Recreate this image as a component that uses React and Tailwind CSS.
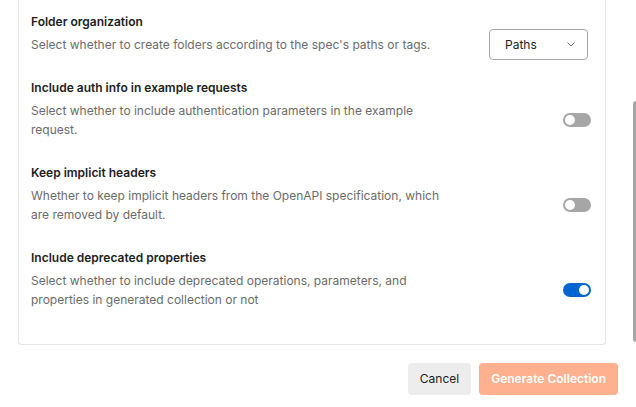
const rows = [
  {
    title: 'Folder organization',
    desc: "Select whether to create folders according to the spec's paths or tags.",
    control: 'select',
  },
  {
    title: 'Include auth info in example requests',
    desc: 'Select whether to include authentication parameters in the example request.',
    control: 'toggle',
    on: false,
  },
  {
    title: 'Keep implicit headers',
    desc: 'Whether to keep implicit headers from the OpenAPI specification, which are removed by default.',
    control: 'toggle',
    on: false,
  },
  {
    title: 'Include deprecated properties',
    desc: 'Select whether to include deprecated operations, parameters, and properties in generated collection or not',
    control: 'toggle',
    on: true,
  },
];

const Toggle = ({ on }) => (
  <div className={`w-[28px] h-[14px] rounded-full flex items-center px-[2px] ${on ? 'bg-[#0265d2] justify-end' : 'bg-[#a6a6a6] justify-start'}`}>
    <div className="w-[10px] h-[10px] rounded-full bg-white" />
  </div>
);

const Select = () => (
  <div className="-my-[6px] mr-[3px] w-[99px] h-[31px] border border-[#a6a6a6] rounded-[4px] flex items-center justify-between pl-[15px] pr-[12px]">
    <span className="text-[12px] text-[#212121]">Paths</span>
    <svg width="8" height="5" viewBox="0 0 8 5" fill="none">
      <path d="M0.5 0.5l3.5 3.5L7.5 0.5" stroke="#707070" strokeWidth="1" />
    </svg>
  </div>
);

export default function App() {
  return (
    <div className="relative w-[636px] h-[407px] bg-white overflow-hidden" style={{ fontFamily: 'Inter, "Noto Sans", sans-serif' }}>
      <div className="ml-[18px] w-[588px] border-x border-b border-[#e6e6e6] rounded-b-[4px] pl-[12px] pr-[14px] pt-[12px] pb-[35px] flex flex-col gap-[24px]">
        {rows.map(r => (
          <div key={r.title}>
            <p className="text-[12px] leading-[20px] font-semibold text-[#212121]">{r.title}</p>
            <div className="mt-[3px] flex items-center justify-between">
              <p className="max-w-[420px] text-[12px] leading-[19px] text-[#6b6b6b]">{r.desc}</p>
              {r.control === 'select' ? <Select /> : <Toggle on={r.on} />}
            </div>
          </div>
        ))}
      </div>

      <div className="mt-[18px] mr-[18px] flex justify-end gap-[8px]">
        <button className="h-[32px] px-[12px] rounded-[4px] bg-[#ededed] text-[12px] text-[#212121]">Cancel</button>
        <button className="h-[32px] px-[12px] rounded-[4px] bg-[#ffb08f] text-[12px] font-semibold text-white">Generate Collection</button>
      </div>

      <div className="absolute right-0 top-[101px] w-[3px] h-[241px] rounded-l-sm bg-[#a6a6a6]" />
    </div>
  );
}
